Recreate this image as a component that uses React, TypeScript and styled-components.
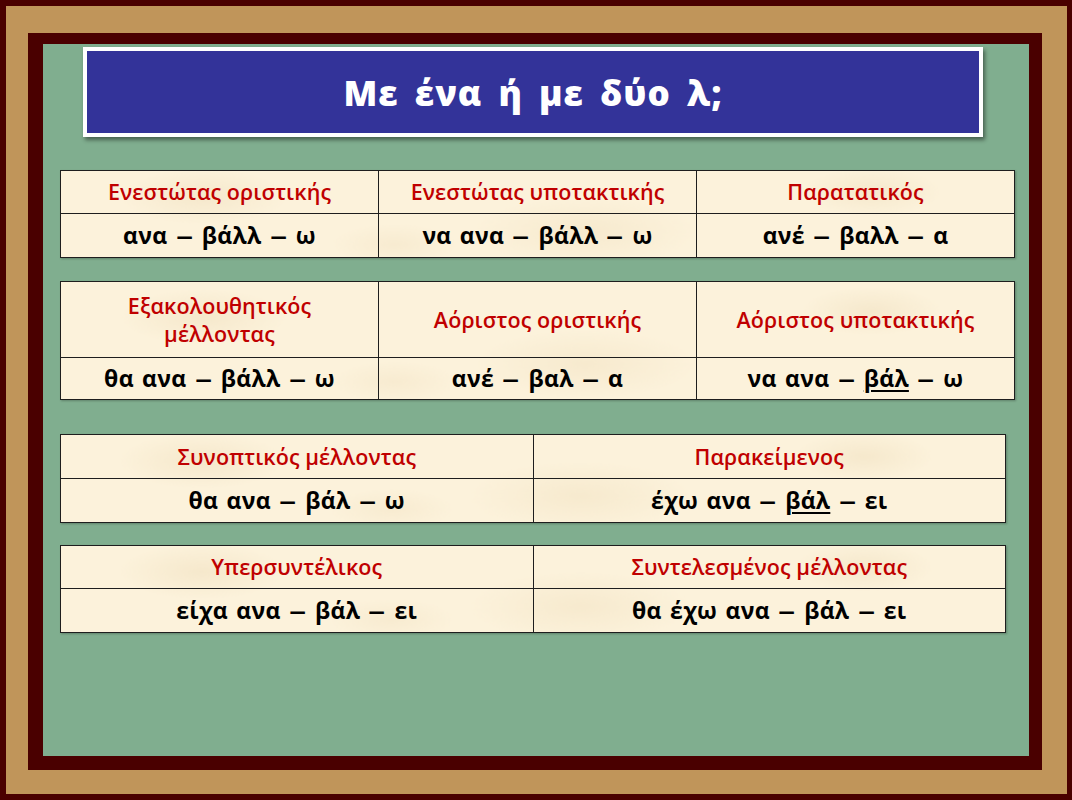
import React from "react";
import styled, { createGlobalStyle } from "styled-components";

const GlobalStyle = createGlobalStyle`
  html, body { margin: 0; padding: 0; background: #4a0000; }
  * { box-sizing: border-box; }
`;

const Frame = styled.div`
  width: 1072px;
  height: 800px;
  background: #4a0000;
  padding: 6px 5px 6px 6px;
  display: flex;
`;

const TanBand = styled.div`
  flex: 1;
  background: #c0955a;
  padding: 27px 25px 24px 22px;
  display: flex;
`;

const InnerBand = styled.div`
  flex: 1;
  background: #4a0000;
  padding: 11px 13px 14px 15px;
  display: flex;
`;

const Board = styled.div`
  flex: 1;
  background: #80ae8f;
  padding: 3px 0 0 17px;
  display: flex;
  flex-direction: column;
  align-items: flex-start;
`;

const TitleBox = styled.div`
  width: 900px;
  height: 90px;
  margin: 0 0 33px 23px;
  background: #333399;
  border: 4px solid #ffffff;
  box-shadow: 2px 3px 4px rgba(0, 0, 0, 0.45);
  display: flex;
  align-items: center;
  justify-content: center;
`;

const Title = styled.h1`
  margin: 0;
  color: #ffffff;
  font-family: "Open Sans", "DejaVu Sans", sans-serif;
  font-weight: 800;
  font-size: 35px;
  letter-spacing: 1px;
  word-spacing: 6px;
`;

const Table = styled.table<{ $width: number; $gap: number }>`
  width: ${(p) => p.$width}px;
  margin-bottom: ${(p) => p.$gap}px;
  border-collapse: collapse;
  table-layout: fixed;
  background-color: #fcf2db;
  background-image:
    radial-gradient(ellipse 120px 40px at 15% 30%, rgba(226, 202, 158, 0.25), transparent 70%),
    radial-gradient(ellipse 160px 50px at 55% 70%, rgba(228, 204, 160, 0.22), transparent 70%),
    radial-gradient(ellipse 100px 35px at 85% 25%, rgba(222, 198, 152, 0.22), transparent 70%),
    radial-gradient(ellipse 90px 30px at 35% 85%, rgba(232, 210, 170, 0.22), transparent 70%);
  box-shadow: 1px 1px 2px rgba(0, 0, 0, 0.25);
`;

const Row = styled.tr<{ $h: number }>`
  height: ${(p) => p.$h}px;
`;

const HeadCell = styled.td`
  border: 1.5px solid #1e1e1e;
  padding: 0 6px;
  text-align: center;
  vertical-align: middle;
  color: #c00000;
  font-family: "Open Sans", "Noto Sans", sans-serif;
  font-weight: 600;
  font-size: 21.5px;
  letter-spacing: 0.1px;
  line-height: 1.3;
`;

const DataCell = styled.td`
  border: 1.5px solid #1e1e1e;
  padding: 0 6px;
  text-align: center;
  vertical-align: middle;
  color: #000000;
  font-family: "Open Sans", "Noto Sans", sans-serif;
  font-weight: 700;
  font-size: 23px;
  letter-spacing: 0.3px;
  word-spacing: 2px;
  line-height: 1.2;
`;

const Dash = styled.span`
  display: inline-block;
  transform: scaleX(1.5);
  margin: 0 3px;
`;

const Stem = styled.span`
  text-decoration: underline;
  text-underline-offset: 3px;
  text-decoration-thickness: 2px;
`;

type Part = string | { u: string };

function renderData(parts: Part[]) {
  const out: React.ReactNode[] = [];
  parts.forEach((p, i) => {
    if (typeof p === "string") {
      const bits = p.split("–");
      bits.forEach((b, k) => {
        if (k > 0) out.push(<Dash key={`d${i}-${k}`}>–</Dash>);
        if (b) out.push(<React.Fragment key={`t${i}-${k}`}>{b}</React.Fragment>);
      });
    } else {
      out.push(<Stem key={`u${i}`}>{p.u}</Stem>);
    }
  });
  return out;
}

type Cell = { head: React.ReactNode; data: Part[] };

const groups: { width: number; gap: number; headH: number; dataH: number; cells: Cell[] }[] = [
  {
    width: 955,
    gap: 23,
    headH: 43,
    dataH: 44,
    cells: [
      { head: "Ενεστώτας οριστικής", data: ["ανα – βάλλ – ω"] },
      { head: "Ενεστώτας υποτακτικής", data: ["να ανα – βάλλ – ω"] },
      { head: "Παρατατικός", data: ["ανέ – βαλλ – α"] },
    ],
  },
  {
    width: 955,
    gap: 34,
    headH: 76,
    dataH: 42,
    cells: [
      {
        head: (
          <>
            Εξακολουθητικός
            <br />
            μέλλοντας
          </>
        ),
        data: ["θα ανα – βάλλ – ω"],
      },
      { head: "Αόριστος οριστικής", data: ["ανέ – βαλ – α"] },
      { head: "Αόριστος υποτακτικής", data: ["να ανα – ", { u: "βάλ" }, " – ω"] },
    ],
  },
  {
    width: 946,
    gap: 22,
    headH: 44,
    dataH: 44,
    cells: [
      { head: "Συνοπτικός μέλλοντας", data: ["θα ανα – βάλ – ω"] },
      { head: "Παρακείμενος", data: ["έχω ανα – ", { u: "βάλ" }, " – ει"] },
    ],
  },
  {
    width: 946,
    gap: 0,
    headH: 43,
    dataH: 44,
    cells: [
      { head: "Υπερσυντέλικος", data: ["είχα ανα – βάλ – ει"] },
      { head: "Συντελεσμένος μέλλοντας", data: ["θα έχω ανα – βάλ – ει"] },
    ],
  },
];

export default function App() {
  return (
    <>
      <GlobalStyle />
      <Frame>
        <TanBand>
          <InnerBand>
            <Board>
              <TitleBox>
                <Title>Με ένα ή με δύο λ;</Title>
              </TitleBox>
              {groups.map((g, i) => (
                <Table key={i} $width={g.width} $gap={g.gap}>
                  <tbody>
                    <Row $h={g.headH}>
                      {g.cells.map((c, j) => (
                        <HeadCell key={j}>{c.head}</HeadCell>
                      ))}
                    </Row>
                    <Row $h={g.dataH}>
                      {g.cells.map((c, j) => (
                        <DataCell key={j}>{renderData(c.data)}</DataCell>
                      ))}
                    </Row>
                  </tbody>
                </Table>
              ))}
            </Board>
          </InnerBand>
        </TanBand>
      </Frame>
    </>
  );
}
